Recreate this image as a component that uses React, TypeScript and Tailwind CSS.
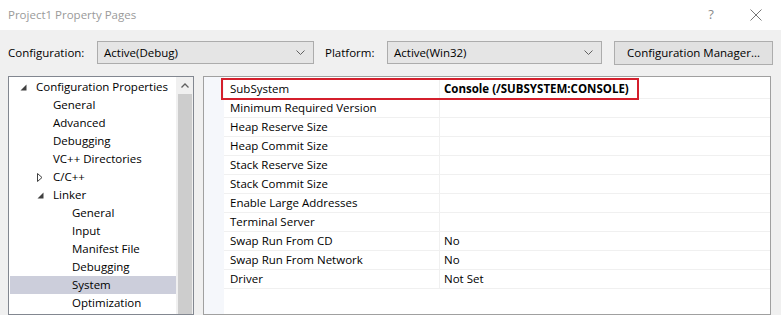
import { useState } from "react"

const treeItems = [
  { label: "Configuration Properties", indent: 0, toggle: "open" },
  { label: "General", indent: 1 },
  { label: "Advanced", indent: 1 },
  { label: "Debugging", indent: 1 },
  { label: "VC++ Directories", indent: 1 },
  { label: "C/C++", indent: 1, toggle: "closed" },
  { label: "Linker", indent: 1, toggle: "open" },
  { label: "General", indent: 2 },
  { label: "Input", indent: 2 },
  { label: "Manifest File", indent: 2 },
  { label: "Debugging", indent: 2 },
  { label: "System", indent: 2 },
  { label: "Optimization", indent: 2 },
]

const props = [
  { name: "SubSystem", value: "Console (/SUBSYSTEM:CONSOLE)", bold: true },
  { name: "Minimum Required Version", value: "" },
  { name: "Heap Reserve Size", value: "" },
  { name: "Heap Commit Size", value: "" },
  { name: "Stack Reserve Size", value: "" },
  { name: "Stack Commit Size", value: "" },
  { name: "Enable Large Addresses", value: "" },
  { name: "Terminal Server", value: "" },
  { name: "Swap Run From CD", value: "No" },
  { name: "Swap Run From Network", value: "No" },
  { name: "Driver", value: "Not Set" },
]

function Chevron() {
  return (
    <svg width="9" height="6" viewBox="0 0 9 6" className="text-[#606060]">
      <path d="M0.5 0.5 L4.5 4.5 L8.5 0.5" fill="none" stroke="currentColor" strokeWidth="1" />
    </svg>
  )
}

function Combo({ value, width }: { value: string; width: string }) {
  return (
    <div className={`${width} h-[23px] flex items-center justify-between border border-[#acacac] bg-[#e5e5e5] pl-[6px] pr-[8px]`}>
      <span>{value}</span>
      <Chevron />
    </div>
  )
}

function Toggle({ kind }: { kind?: string }) {
  if (kind === "open") {
    return (
      <svg width="7" height="7" viewBox="0 0 7 7">
        <path d="M6.5 0.5 L6.5 6.5 L0.5 6.5 Z" fill="#404040" />
      </svg>
    )
  }
  if (kind === "closed") {
    return (
      <svg width="6" height="9" viewBox="0 0 6 9">
        <path d="M0.5 0.5 L5 4.5 L0.5 8.5 Z" fill="none" stroke="#404040" strokeWidth="1" />
      </svg>
    )
  }
  return null
}

export default function App() {
  const [selected] = useState(11)

  return (
    <div
      className="w-[781px] h-[315px] overflow-hidden bg-[#f0f0f0] text-[11.5px] text-black flex flex-col"
      style={{ fontFamily: '"Open Sans", "Noto Sans", sans-serif' }}
    >
      {/* title bar */}
      <div className="h-[30px] bg-white flex items-center pl-[8px] shrink-0">
        <span className="text-[#9a9a9a] text-[11.5px]">Project1 Property Pages</span>
        <span className="ml-auto text-[#8a8a8a] text-[13px] w-[20px] text-center">?</span>
        <svg width="12" height="12" viewBox="0 0 12 12" className="ml-[29px] mr-[19px]">
          <path d="M0.5 0.5 L11.5 11.5 M11.5 0.5 L0.5 11.5" stroke="#777" strokeWidth="1" />
        </svg>
      </div>

      {/* config row */}
      <div className="flex items-center mt-[11px] pl-[8px] h-[23px] shrink-0">
        <span className="w-[89px]">Configuration:</span>
        <Combo value="Active(Debug)" width="w-[217px]" />
        <span className="ml-[11px] w-[62px]">Platform:</span>
        <Combo value="Active(Win32)" width="w-[215px]" />
        <div className="ml-[12px] w-[159px] h-[24px] flex items-center justify-center border border-[#adadad] bg-[#e1e1e1]">
          Configuration Manager...
        </div>
      </div>

      {/* main */}
      <div className="flex mt-[12px] pl-[8px] gap-[9px] flex-1 min-h-0">
        {/* tree */}
        <div className="w-[186px] border border-[#828790] bg-white flex">
          <div className="flex-1 pt-[1px] pl-[1px]">
            {treeItems.map((it, i) => (
              <div
                key={i}
                className={`h-[18px] flex items-center ${i === selected ? "bg-[#cccedb]" : ""}`}
              >
                <div
                  className={`flex items-center ${
                    it.indent === 0 ? "pl-[10px]" : it.indent === 1 ? "pl-[27px]" : "pl-[46px]"
                  }`}
                >
                  <div className="w-[16px] flex items-center">
                    <Toggle kind={it.toggle} />
                  </div>
                  <span>{it.label}</span>
                </div>
              </div>
            ))}
          </div>
          {/* scrollbar */}
          <div className="w-[17px] flex flex-col bg-[#f0f0f0] border-l border-[#f0f0f0]">
            <div className="h-[17px] flex items-center justify-center">
              <svg width="8" height="5" viewBox="0 0 8 5">
                <path d="M0.5 4.5 L4 1 L7.5 4.5" fill="none" stroke="#606060" strokeWidth="1.3" />
              </svg>
            </div>
            <div className="flex-1 mx-[1px] bg-[#cdcdcd]" />
          </div>
        </div>

        {/* property grid */}
        <div className="w-[568px] border border-[#a0a0a0] bg-white flex">
          <div className="w-[20px] bg-[#f5f7fb] shrink-0" />
          <div className="flex-1 pt-[3px] relative">
            {props.map((p, i) => (
              <div key={i} className="h-[19px] flex border-b border-[#f0f0f0]">
                <div className="w-[216px] pl-[6px] flex items-center border-r border-[#f0f0f0]">
                  {p.name}
                </div>
                <div className={`flex-1 pl-[4px] flex items-center ${p.bold ? "font-bold" : ""}`}>
                  {p.value}
                </div>
              </div>
            ))}
            <div className="absolute left-[-3px] top-[1px] w-[418px] h-[22px] border-[2.5px] border-[#d41f2c]" />
          </div>
        </div>
      </div>
    </div>
  )
}
